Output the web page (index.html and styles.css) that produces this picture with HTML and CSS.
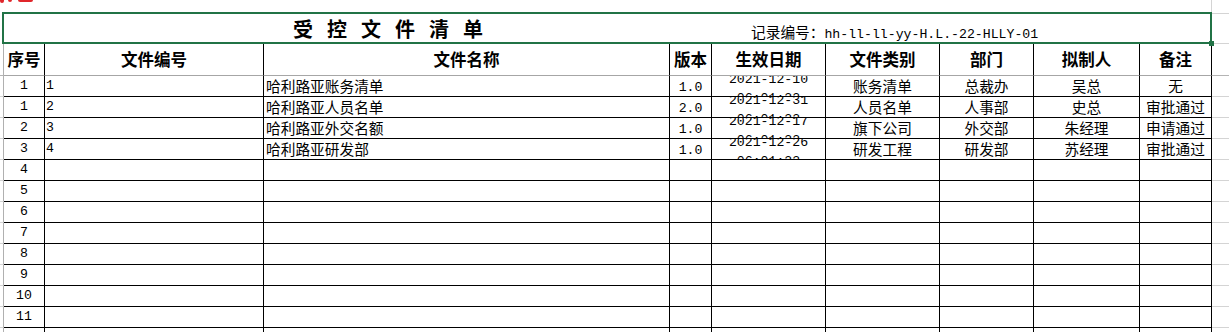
FILE: index.html
```html
<!DOCTYPE html>
<html lang="zh-CN">
<head>
<meta charset="utf-8">
<title>受控文件清单</title>
<link rel="stylesheet" href="styles.css">
</head>
<body>
<div class="sheet">
  <div class="top">
    <div class="red-area"><span class="r1"></span><span class="r2"></span><span class="r3"></span></div>
    <div class="vline"></div>
  </div>
  <div class="titlerow">
    <div class="titlebox">
      <span class="title">受控文件清单</span>
      <span class="record">记录编号：<span class="mono">hh-ll-ll-yy-H.L.-22-HLLY-01</span></span>
      <span class="handle"></span>
    </div>
    <div class="tfill"></div>
  </div>
  <div class="grid">
    <div class="lf hl"></div><div class="c h">序号</div><div class="c h">文件编号</div><div class="c h">文件名称</div><div class="c h">版本</div><div class="c h">生效日期</div><div class="c h">文件类别</div><div class="c h">部门</div><div class="c h">拟制人</div><div class="c h">备注</div><div class="rf hl"></div>

    <div class="lf"></div><div class="c m">1</div><div class="c m l">1</div><div class="c l">哈利路亚账务清单</div><div class="c m ver">1.0</div><div class="c m dt"><span>2021-12-10<br>06:01:22</span></div><div class="c">账务清单</div><div class="c">总裁办</div><div class="c">吴总</div><div class="c">无</div><div class="rf"></div>

    <div class="lf"></div><div class="c m">1</div><div class="c m l">2</div><div class="c l">哈利路亚人员名单</div><div class="c m ver">2.0</div><div class="c m dt"><span>2021-12-31<br>06:01:22</span></div><div class="c">人员名单</div><div class="c">人事部</div><div class="c">史总</div><div class="c">审批通过</div><div class="rf"></div>

    <div class="lf"></div><div class="c m">2</div><div class="c m l">3</div><div class="c l">哈利路亚外交名额</div><div class="c m ver">1.0</div><div class="c m dt"><span>2021-12-17<br>06:01:22</span></div><div class="c">旗下公司</div><div class="c">外交部</div><div class="c">朱经理</div><div class="c">申请通过</div><div class="rf"></div>

    <div class="lf"></div><div class="c m">3</div><div class="c m l">4</div><div class="c l">哈利路亚研发部</div><div class="c m ver">1.0</div><div class="c m dt"><span>2021-12-26<br>06:01:23</span></div><div class="c">研发工程</div><div class="c">研发部</div><div class="c">苏经理</div><div class="c">审批通过</div><div class="rf"></div>

    <div class="lf"></div><div class="c m">4</div><div class="c"></div><div class="c"></div><div class="c"></div><div class="c"></div><div class="c"></div><div class="c"></div><div class="c"></div><div class="c"></div><div class="rf"></div>
    <div class="lf"></div><div class="c m">5</div><div class="c"></div><div class="c"></div><div class="c"></div><div class="c"></div><div class="c"></div><div class="c"></div><div class="c"></div><div class="c"></div><div class="rf"></div>
    <div class="lf"></div><div class="c m">6</div><div class="c"></div><div class="c"></div><div class="c"></div><div class="c"></div><div class="c"></div><div class="c"></div><div class="c"></div><div class="c"></div><div class="rf"></div>
    <div class="lf"></div><div class="c m">7</div><div class="c"></div><div class="c"></div><div class="c"></div><div class="c"></div><div class="c"></div><div class="c"></div><div class="c"></div><div class="c"></div><div class="rf"></div>
    <div class="lf"></div><div class="c m">8</div><div class="c"></div><div class="c"></div><div class="c"></div><div class="c"></div><div class="c"></div><div class="c"></div><div class="c"></div><div class="c"></div><div class="rf"></div>
    <div class="lf"></div><div class="c m">9</div><div class="c"></div><div class="c"></div><div class="c"></div><div class="c"></div><div class="c"></div><div class="c"></div><div class="c"></div><div class="c"></div><div class="rf"></div>
    <div class="lf"></div><div class="c m">10</div><div class="c"></div><div class="c"></div><div class="c"></div><div class="c"></div><div class="c"></div><div class="c"></div><div class="c"></div><div class="c"></div><div class="rf"></div>
    <div class="lf"></div><div class="c m">11</div><div class="c"></div><div class="c"></div><div class="c"></div><div class="c"></div><div class="c"></div><div class="c"></div><div class="c"></div><div class="c"></div><div class="rf"></div>
    <div class="lf"></div><div class="c m">12</div><div class="c"></div><div class="c"></div><div class="c"></div><div class="c"></div><div class="c"></div><div class="c"></div><div class="c"></div><div class="c"></div><div class="rf"></div>
  </div>
</div>
</body>
</html>
```

FILE: styles.css
```css
* {
  box-sizing: border-box;
  margin: 0;
  padding: 0;
}

html, body {
  background: #ffffff;
  overflow: hidden;
}

body {
  width: 1229px;
  height: 332px;
  font-family: "Noto Sans CJK SC", "Noto Sans", sans-serif;
  color: #000000;
}

.sheet {
  width: 1229px;
}

/* top strip */
.top {
  display: flex;
  height: 12px;
}

.red-area {
  flex: 0 0 1211px;
  display: flex;
  align-items: flex-start;
}

.red-area span {
  display: block;
  background: #e0262b;
  border-radius: 0 0 2px 2px;
}

.r1 {
  width: 4px;
  height: 3px;
}

.r2 {
  width: 4px;
  height: 2px;
  margin-left: 4px;
}

.r3 {
  width: 15px;
  height: 2px;
  margin-left: 6px;
}

.vline {
  width: 1px;
  height: 12px;
  background: #d4d4d4;
}

/* title row */
.titlerow {
  display: flex;
  height: 32px;
}

.titlebox {
  position: relative;
  margin-left: 2px;
  width: 1210px;
  height: 32px;
  border: 2px solid #217346;
  display: flex;
  align-items: flex-start;
  white-space: nowrap;
}

.title {
  margin-left: 289px;
  margin-top: 5px;
  font-size: 20px;
  line-height: 20px;
  letter-spacing: 14px;
  font-weight: 700;
}

.record {
  margin-left: 254px;
  margin-top: 10px;
  font-size: 14.7px;
  line-height: 15px;
}

.mono {
  font-family: "Liberation Mono", monospace;
  font-size: 13.2px;
}

.handle {
  position: absolute;
  right: -4px;
  bottom: -4px;
  width: 5px;
  height: 5px;
  background: #217346;
}

.tfill {
  flex: 1;
  margin-top: 1px;
  height: 31px;
  border-top: 1px solid #d4d4d4;
  border-bottom: 1px solid #d4d4d4;
}

/* grid */
.grid {
  display: grid;
  grid-template-columns: 4px 41px 219px 406px 42px 114px 114px 94px 106px 72px 1fr;
  grid-template-rows: 32px;
  grid-auto-rows: 21px;
}

.c {
  border-right: 1px solid #000000;
  border-bottom: 1px solid #000000;
  display: flex;
  align-items: center;
  justify-content: center;
  font-size: 14.7px;
  line-height: 1;
  overflow: hidden;
  white-space: nowrap;
}

.lf {
  border-right: 1px solid #b0b0b0;
  border-bottom: 1px solid #d4d4d4;
}

.rf {
  border-bottom: 1px solid #d4d4d4;
}

.h {
  font-weight: 700;
  font-size: 16.5px;
  border-bottom-color: #a6a6a6;
}

.hl {
  border-bottom-color: #b4b4b4;
}

.l {
  justify-content: flex-start;
  padding-left: 2px;
}

.m {
  font-family: "Liberation Mono", monospace;
  font-size: 13.2px;
}

.m.l {
  padding-left: 1px;
}

.ver {
  padding-top: 3px;
}

.dt {
  align-items: flex-start;
}

.dt span {
  display: block;
  margin-top: -6px;
  line-height: 19px;
  text-align: center;
}
```
